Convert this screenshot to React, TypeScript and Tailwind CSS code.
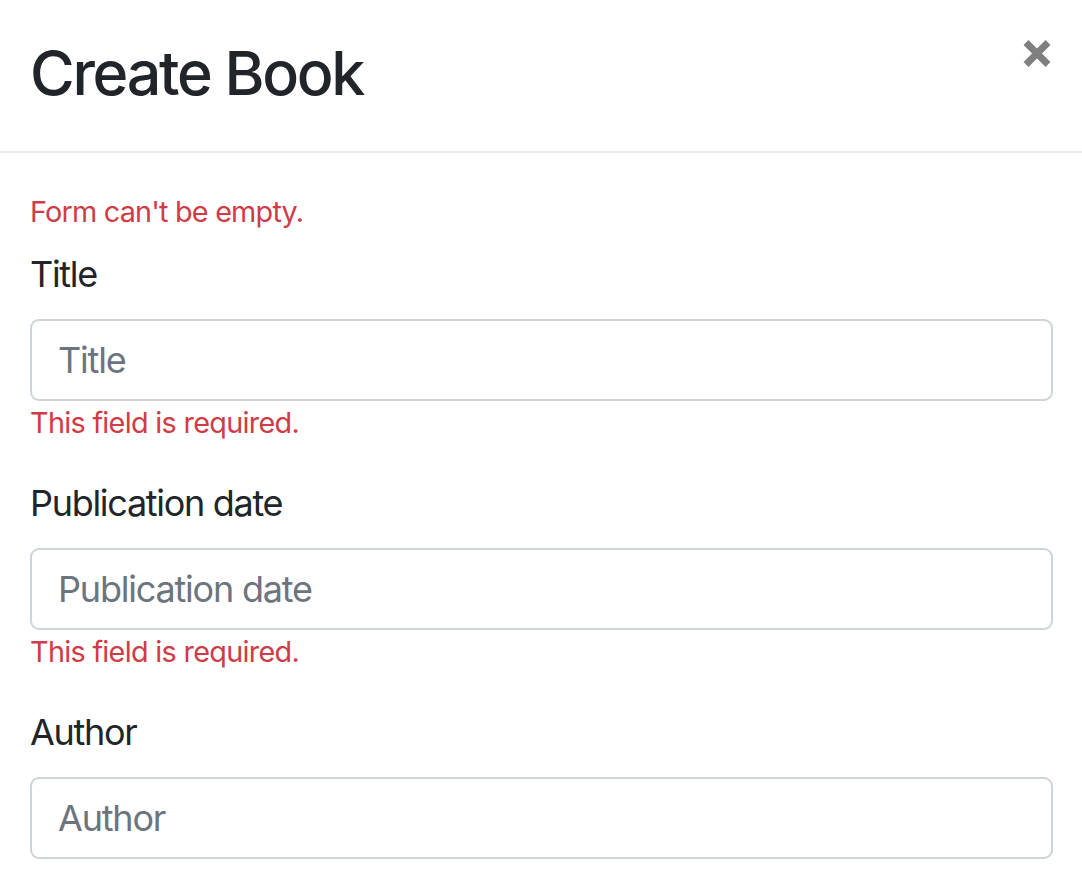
import React from "react";

function Field({ label, placeholder, error }: { label: string; placeholder: string; error?: boolean }) {
  return (
    <div className="mb-[32px]">
      <label className="block text-[36px] leading-[54px] mb-[18px] text-[#212529] tracking-[-1.3px]">{label}</label>
      <input
        placeholder={placeholder}
        className="block w-full h-[82px] px-[26px] text-[36px] tracking-[-1.2px] text-[#495057] placeholder:text-[#6c757d] bg-white border-2 border-[#ced4da] rounded-[9px] outline-none"
      />
      {error && <div className="text-[28.8px] leading-[43px] text-[#d03c46] tracking-[-0.7px]">This field is required.</div>}
    </div>
  );
}

export default function App() {
  return (
    <div className="w-[1082px] h-[876px] overflow-hidden bg-white" style={{ fontFamily: "Inter, 'Noto Sans', sans-serif" }}>
      <div className="flex items-start justify-between h-[153px] border-b-2 border-[#e9ecef] pl-[30px] pr-[31px]">
        <h3 className="text-[61px] leading-[74px] font-medium text-[#212529] mt-[36px] tracking-[-2.3px]">Create Book</h3>
        <button className="mt-[40px] w-[28px] h-[27px]" aria-label="Close">
          <svg viewBox="0 0 28 27" width="28" height="27">
            <path d="M3 2.5 L25 24.5 M25 2.5 L3 24.5" stroke="#7f7f7f" strokeWidth="7" strokeLinecap="butt" />
          </svg>
        </button>
      </div>
      <div className="pl-[30px] pr-[29px] pt-[37px]">
        <div className="text-[28.8px] leading-[43px] text-[#d03c46] mb-[14px] tracking-[-0.8px]">Form can't be empty.</div>
        <Field label="Title" placeholder="Title" error />
        <Field label="Publication date" placeholder="Publication date" error />
        <Field label="Author" placeholder="Author" />
      </div>
    </div>
  );
}
